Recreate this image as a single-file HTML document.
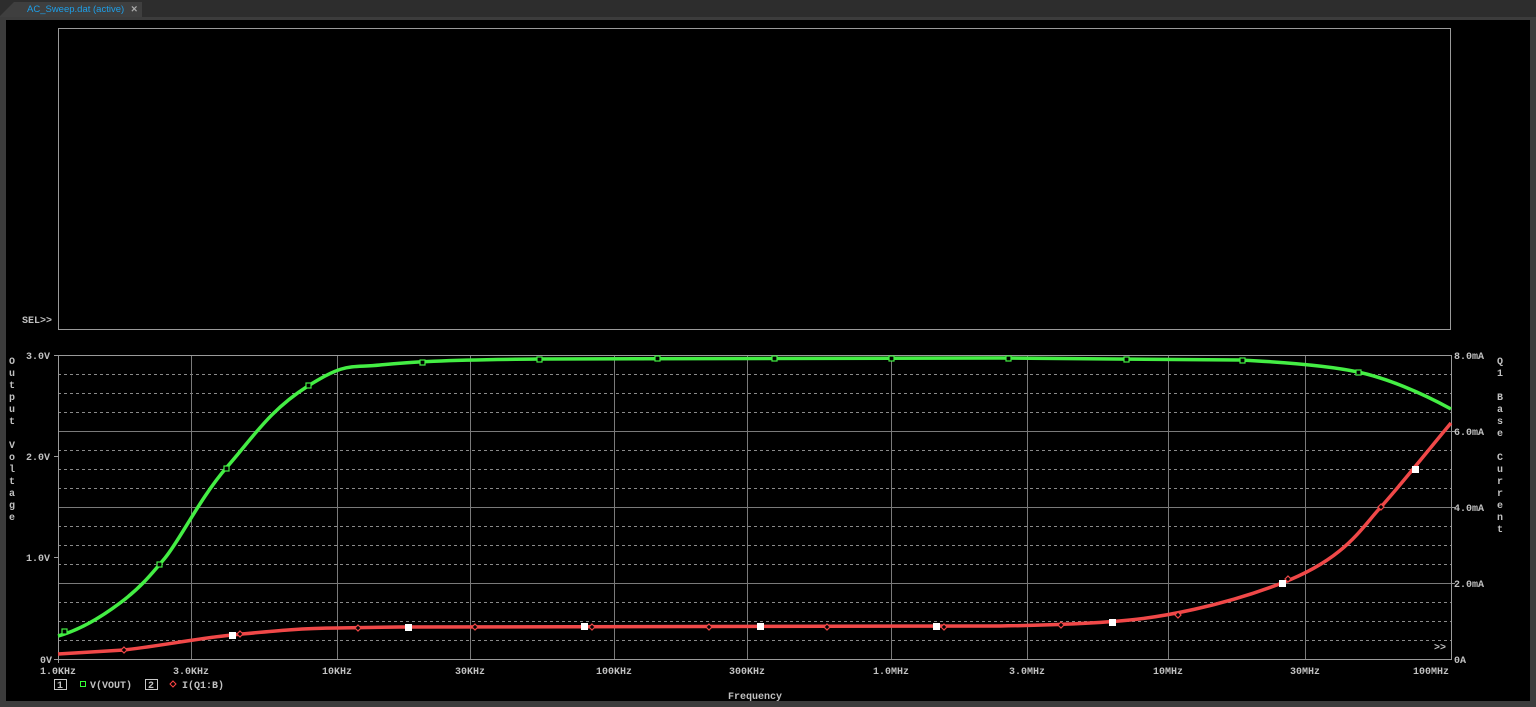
<!DOCTYPE html>
<html><head><meta charset="utf-8"><style>
html,body{margin:0;padding:0;background:#3c3c3c;width:1536px;height:707px;overflow:hidden}
svg{display:block}
text{font-family:"Liberation Mono","DejaVu Sans Mono",monospace;font-size:10px;fill:#c0c0c0;font-weight:bold}
</style></head><body>
<svg width="1536" height="707" xmlns="http://www.w3.org/2000/svg">
<rect x="0" y="0" width="1536" height="707" fill="#3c3c3c"/>
<rect x="0" y="0" width="1536" height="17" fill="#2d2d2d"/>
<polygon points="14,2 142,2 142,17 0,17 0,16" fill="#3f3f3f"/>
<text x="27" y="12" style="font-family:'Liberation Sans',sans-serif;font-size:9.5px;fill:#1e9fe8;font-weight:normal">AC_Sweep.dat (active)</text>
<text x="131" y="12.5" style="font-family:'Liberation Sans',sans-serif;font-size:11px;fill:#aaa;font-weight:bold">×</text>
<rect x="6" y="20" width="1524" height="681" fill="#000"/>
<rect x="58.5" y="28.5" width="1392" height="301" fill="none" stroke="#9a9a9a"/>
<text x="22" y="323">SEL&gt;&gt;</text>
<g stroke="#8a8a8a" stroke-width="1" stroke-dasharray="3,3">
<line x1="58" x2="1451" y1="374.5" y2="374.5"/><line x1="58" x2="1451" y1="393.5" y2="393.5"/><line x1="58" x2="1451" y1="412.5" y2="412.5"/>
<line x1="58" x2="1451" y1="450.5" y2="450.5"/><line x1="58" x2="1451" y1="469.5" y2="469.5"/><line x1="58" x2="1451" y1="488.5" y2="488.5"/>
<line x1="58" x2="1451" y1="526.5" y2="526.5"/><line x1="58" x2="1451" y1="545.5" y2="545.5"/><line x1="58" x2="1451" y1="564.5" y2="564.5"/>
<line x1="58" x2="1451" y1="602.5" y2="602.5"/><line x1="58" x2="1451" y1="621.5" y2="621.5"/><line x1="58" x2="1451" y1="640.5" y2="640.5"/>
</g>
<g stroke="#7a7a7a" stroke-width="1">
<line x1="58" x2="1451" y1="431.5" y2="431.5"/><line x1="58" x2="1451" y1="507.5" y2="507.5"/><line x1="58" x2="1451" y1="583.5" y2="583.5"/>
<line x1="191.5" x2="191.5" y1="355" y2="659"/><line x1="337.5" x2="337.5" y1="355" y2="659"/><line x1="470.5" x2="470.5" y1="355" y2="659"/>
<line x1="614.5" x2="614.5" y1="355" y2="659"/><line x1="747.5" x2="747.5" y1="355" y2="659"/><line x1="891.5" x2="891.5" y1="355" y2="659"/>
<line x1="1027.5" x2="1027.5" y1="355" y2="659"/><line x1="1168.5" x2="1168.5" y1="355" y2="659"/><line x1="1305.5" x2="1305.5" y1="355" y2="659"/>
</g>
<g stroke="#9a9a9a" stroke-width="1" fill="none">
<polyline points="54,355.5 1451.5,355.5 1451.5,659.5 54,659.5"/>
<line x1="58.5" x2="58.5" y1="355" y2="663"/>
<line x1="54" x2="58" y1="456.5" y2="456.5"/><line x1="54" x2="58" y1="557.5" y2="557.5"/>
<line x1="1451" x2="1455" y1="431.5" y2="431.5"/><line x1="1451" x2="1455" y1="507.5" y2="507.5"/><line x1="1451" x2="1455" y1="583.5" y2="583.5"/>
</g>
<text x="26" y="359">3.0V</text><text x="26" y="460">2.0V</text><text x="26" y="561">1.0V</text><text x="40" y="663">0V</text>
<text x="1454" y="359">8.0mA</text><text x="1454" y="435">6.0mA</text><text x="1454" y="511">4.0mA</text><text x="1454" y="587">2.0mA</text><text x="1454" y="663">0A</text>
<g text-anchor="middle">
<text x="12" y="364">O</text><text x="12" y="376">u</text><text x="12" y="388">t</text><text x="12" y="400">p</text><text x="12" y="412">u</text><text x="12" y="424">t</text>
<text x="12" y="448">V</text><text x="12" y="460">o</text><text x="12" y="472">l</text><text x="12" y="484">t</text><text x="12" y="496">a</text><text x="12" y="508">g</text><text x="12" y="520">e</text>
<text x="1500" y="364">Q</text><text x="1500" y="376">1</text><text x="1500" y="400">B</text><text x="1500" y="412">a</text><text x="1500" y="424">s</text><text x="1500" y="436">e</text>
<text x="1500" y="460">C</text><text x="1500" y="472">u</text><text x="1500" y="484">r</text><text x="1500" y="496">r</text><text x="1500" y="508">e</text><text x="1500" y="520">n</text><text x="1500" y="532">t</text>
<text x="58" y="674">1.0KHz</text><text x="191" y="674">3.0KHz</text><text x="337" y="674">10KHz</text><text x="470" y="674">30KHz</text>
<text x="614" y="674">100KHz</text><text x="747" y="674">300KHz</text><text x="891" y="674">1.0MHz</text><text x="1027" y="674">3.0MHz</text>
<text x="1168" y="674">10MHz</text><text x="1305" y="674">30MHz</text><text x="1431" y="674">100MHz</text>
<text x="755" y="699">Frequency</text>
</g>
<text x="1434" y="650">&gt;&gt;</text>
<rect x="54.5" y="679.5" width="12" height="10" fill="none" stroke="#c8c8c8"/><text x="57" y="688">1</text>
<rect x="80.5" y="681.5" width="5" height="5" fill="none" stroke="#3f3"/>
<text x="90" y="688">V(VOUT)</text>
<rect x="145.5" y="679.5" width="12" height="10" fill="none" stroke="#c8c8c8"/><text x="148" y="688">2</text>
<polygon points="173,681 176,684 173,687 170,684" fill="none" stroke="#f44"/>
<text x="182" y="688">I(Q1:B)</text>
<path fill="none" stroke="#44ee44" stroke-width="3.5" stroke-linejoin="round" d="M58,636 C80,630 100,618 120,603 S150,576 165,558 S200,498 227,467 S270,410 308,386 S350,368 380,365 S440,360 540,359 L1000,358 L1240,360 C1280,362 1330,366 1358,372 S1420,392 1451,409"/>
<path fill="none" stroke="#f04848" stroke-width="3.5" stroke-linejoin="round" d="M58,654 L124,650 C160,646 200,638 232,635 S300,628 337,628 L400,627 L1000,626 C1060,625 1100,623 1130,620 S1220,607 1282,583 S1360,530 1380,508 S1430,448 1451,423"/>
<g fill="#000" stroke="#44ee44" stroke-width="1.2">
<rect x="62" y="629" width="5" height="5"/><rect x="157" y="562" width="5" height="5"/><rect x="224" y="466" width="5" height="5"/><rect x="306" y="383" width="5" height="5"/><rect x="420" y="360" width="5" height="5"/><rect x="537" y="357" width="5" height="5"/><rect x="655" y="356" width="5" height="5"/><rect x="772" y="356" width="5" height="5"/><rect x="889" y="356" width="5" height="5"/><rect x="1006" y="356" width="5" height="5"/><rect x="1124" y="357" width="5" height="5"/><rect x="1240" y="358" width="5" height="5"/><rect x="1356" y="370" width="5" height="5"/>
</g>
<g fill="#000" stroke="#f04848" stroke-width="1.2">
<polygon points="124,647 127,650 124,653 121,650"/><polygon points="240,631 243,634 240,637 237,634"/><polygon points="358,625 361,628 358,631 355,628"/><polygon points="475,624 478,627 475,630 472,627"/><polygon points="592,624 595,627 592,630 589,627"/><polygon points="709,624 712,627 709,630 706,627"/><polygon points="827,624 830,627 827,630 824,627"/><polygon points="944,624 947,627 944,630 941,627"/><polygon points="1061,622 1064,625 1061,628 1058,625"/><polygon points="1178,612 1181,615 1178,618 1175,615"/><polygon points="1288,576 1291,579 1288,582 1285,579"/><polygon points="1381,504 1384,507 1381,510 1378,507"/>
</g>
<g fill="#fff">
<rect x="229" y="632" width="7" height="7"/><rect x="405" y="624" width="7" height="7"/><rect x="581" y="623" width="7" height="7"/><rect x="757" y="623" width="7" height="7"/><rect x="933" y="623" width="7" height="7"/><rect x="1109" y="619" width="7" height="7"/><rect x="1279" y="580" width="7" height="7"/><rect x="1412" y="466" width="7" height="7"/>
</g>
</svg>
</body></html>
